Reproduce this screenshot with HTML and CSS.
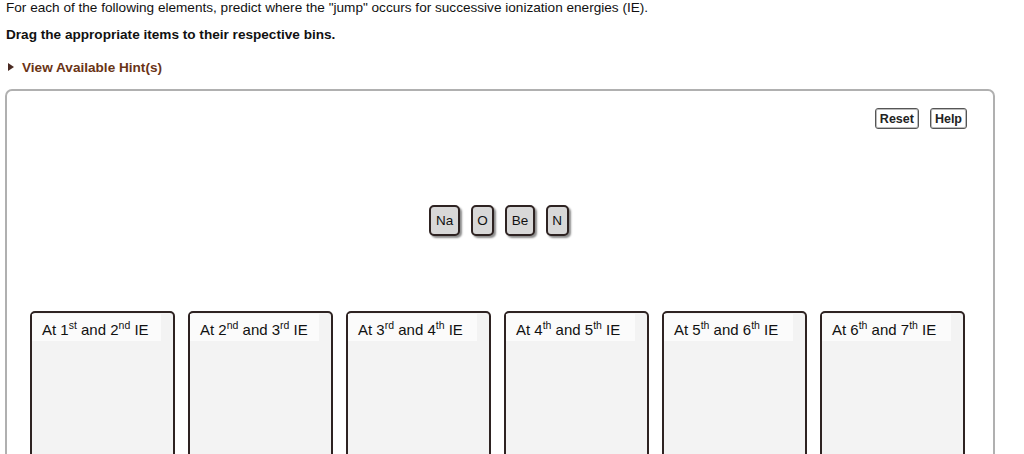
FILE: index.html
```html
<!DOCTYPE html>
<html>
<head>
<meta charset="utf-8">
<link rel="stylesheet" href="styles.css">
</head>
<body>
<div class="page">
  <p class="intro">For each of the following elements, predict where the "jump" occurs for successive ionization energies (IE).</p>
  <p class="instr">Drag the appropriate items to their respective bins.</p>
  <div class="hint"><span class="tri"></span><span class="hint-text">View Available Hint(s)</span></div>
  <div class="board">
    <div class="tools">
      <button class="tbtn">Reset</button>
      <button class="tbtn">Help</button>
    </div>
    <div class="tiles">
      <div class="tile">Na</div>
      <div class="tile">O</div>
      <div class="tile">Be</div>
      <div class="tile">N</div>
    </div>
    <div class="bins">
      <div class="bin"><div class="label">At 1<sup>st</sup> and 2<sup>nd</sup> IE</div></div>
      <div class="bin"><div class="label">At 2<sup>nd</sup> and 3<sup>rd</sup> IE</div></div>
      <div class="bin"><div class="label">At 3<sup>rd</sup> and 4<sup>th</sup> IE</div></div>
      <div class="bin"><div class="label">At 4<sup>th</sup> and 5<sup>th</sup> IE</div></div>
      <div class="bin"><div class="label">At 5<sup>th</sup> and 6<sup>th</sup> IE</div></div>
      <div class="bin"><div class="label">At 6<sup>th</sup> and 7<sup>th</sup> IE</div></div>
    </div>
  </div>
</div>
</body>
</html>
```
FILE: styles.css
```css
html, body {
  margin: 0;
  padding: 0;
  background: #fff;
  overflow: hidden;
}
body {
  font-family: "Liberation Sans", Arial, sans-serif;
  color: #111;
}
.page {
  padding: 0 29px 0 5px;
}
.intro {
  margin: 0;
  padding: 0 0 0 1px;
  font-size: 13.6px;
  line-height: 16px;
}
.instr {
  margin: 0;
  padding: 11px 0 0 1px;
  font-size: 13.6px;
  line-height: 16px;
  font-weight: bold;
}
.hint {
  display: flex;
  align-items: center;
  margin-top: 16px;
  height: 16px;
  padding-left: 3px;
}
.tri {
  width: 0;
  height: 0;
  border-top: 4.5px solid transparent;
  border-bottom: 4.5px solid transparent;
  border-left: 6px solid #4a2a22;
}
.hint-text {
  margin-left: 8px;
  font-size: 13.6px;
  font-weight: bold;
  color: #6a3416;
}
.board {
  margin-top: 14px;
  border: 2px solid #b0b0b0;
  border-radius: 7px;
  height: 400px;
  box-sizing: border-box;
}
.tools {
  display: flex;
  justify-content: flex-end;
  gap: 11px;
  padding: 17px 26px 0 0;
}
.tbtn {
  font-family: "Liberation Sans", Arial, sans-serif;
  font-size: 12.5px;
  font-weight: bold;
  color: #222;
  background: #fff;
  border: 1px solid #555;
  border-radius: 3px;
  height: 21px;
  padding: 0 4px;
  box-shadow: inset 0 0 0 1px #bbb;
}
.tiles {
  display: flex;
  justify-content: center;
  gap: 11px;
  padding: 76px 2px 0 0;
}
.tile {
  display: flex;
  align-items: center;
  justify-content: center;
  height: 31px;
  box-sizing: border-box;
  padding: 0 4.5px;
  background: #d8d8d8;
  border: 2px solid #2e2322;
  border-radius: 5px;
  font-size: 13.5px;
  color: #111;
  box-shadow: 2px 2px 2px rgba(0,0,0,0.45);
}
.bins {
  display: flex;
  gap: 13px;
  padding: 75px 0 0 23px;
}
.bin {
  width: 145px;
  height: 200px;
  box-sizing: border-box;
  border: 2px solid #2e2322;
  border-radius: 5px;
  background: #f3f3f3;
  flex: none;
}
.label {
  width: 129px;
  height: 27px;
  margin-top: 1px;
  background: #fbfbfb;
  font-size: 15px;
  line-height: 32px;
  padding-left: 10px;
  box-sizing: border-box;
  color: #111;
  white-space: nowrap;
}
.label sup {
  font-size: 10.5px;
  line-height: 0;
  vertical-align: 6px;
}
```
